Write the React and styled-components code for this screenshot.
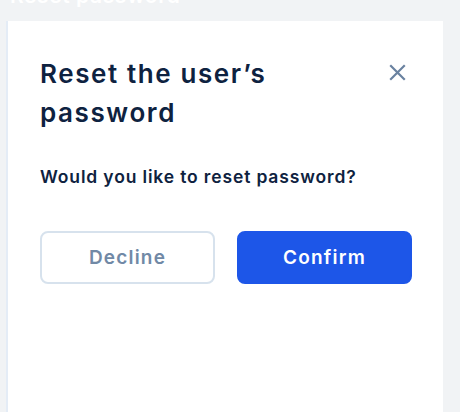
import React from "react";
import styled, { createGlobalStyle } from "styled-components";

const Global = createGlobalStyle`
  html, body { margin: 0; padding: 0; background: #f1f3f5; }
  body { font-family: "Inter", "Noto Sans", sans-serif; overflow: hidden; }
`;

const Page = styled.div`
  height: 412px;
  display: flex;
  flex-direction: column;
  overflow: hidden;
`;

const PageTitle = styled.div`
  margin: -17px 0 0 10px;
  height: 38px;
  font-size: 21px;
  font-weight: 600;
  letter-spacing: 0.6px;
  line-height: 26px;
  color: #ffffff;
`;

const Panel = styled.section`
  margin-left: 6px;
  width: 437px;
  flex: 1;
  background: #ffffff;
  border-left: 2px solid #e4ecf6;
  padding: 33px 31px 0 32px;
  box-sizing: border-box;
`;

const Header = styled.div`
  display: flex;
  justify-content: space-between;
  align-items: flex-start;
`;

const Title = styled.h2`
  margin: 0;
  width: 300px;
  font-size: 26px;
  font-weight: 600;
  letter-spacing: 1.6px;
  line-height: 39px;
  color: #0e2240;
`;

const Close = styled.button`
  border: 0;
  background: none;
  padding: 0;
  margin: 10px 6px 0 0;
  width: 17px;
  height: 17px;
  display: flex;
  cursor: pointer;
`;

const Message = styled.p`
  margin: 33px 0 0;
  font-size: 17.5px;
  font-weight: 600;
  letter-spacing: 0.85px;
  line-height: 24px;
  color: #0e2240;
`;

const Actions = styled.div`
  margin-top: 42px;
  display: grid;
  grid-template-columns: 1fr 1fr;
  gap: 22px;
`;

const Button = styled.button`
  height: 53px;
  border-radius: 8px;
  font-family: inherit;
  font-size: 19px;
  font-weight: 600;
  letter-spacing: 1.2px;
  box-sizing: border-box;
  border: 2px solid ${(p) => (p.$primary ? "#1d56e8" : "#d7e2ed")};
  background: ${(p) => (p.$primary ? "#1d56e8" : "#ffffff")};
  color: ${(p) => (p.$primary ? "#ffffff" : "#7189a6")};
  cursor: pointer;
`;

export default function App() {
  return (
    <Page>
      <Global />
      <PageTitle>Reset password</PageTitle>
      <Panel>
        <Header>
          <Title>Reset the user’s password</Title>
          <Close aria-label="Close">
            <svg width="17" height="17" viewBox="0 0 17 17">
              <path d="M2 2 L15 15 M15 2 L2 15" stroke="#6a82a0" strokeWidth="2.2" strokeLinecap="square" fill="none" />
            </svg>
          </Close>
        </Header>
        <Message>Would you like to reset password?</Message>
        <Actions>
          <Button>Decline</Button>
          <Button $primary>Confirm</Button>
        </Actions>
      </Panel>
    </Page>
  );
}
